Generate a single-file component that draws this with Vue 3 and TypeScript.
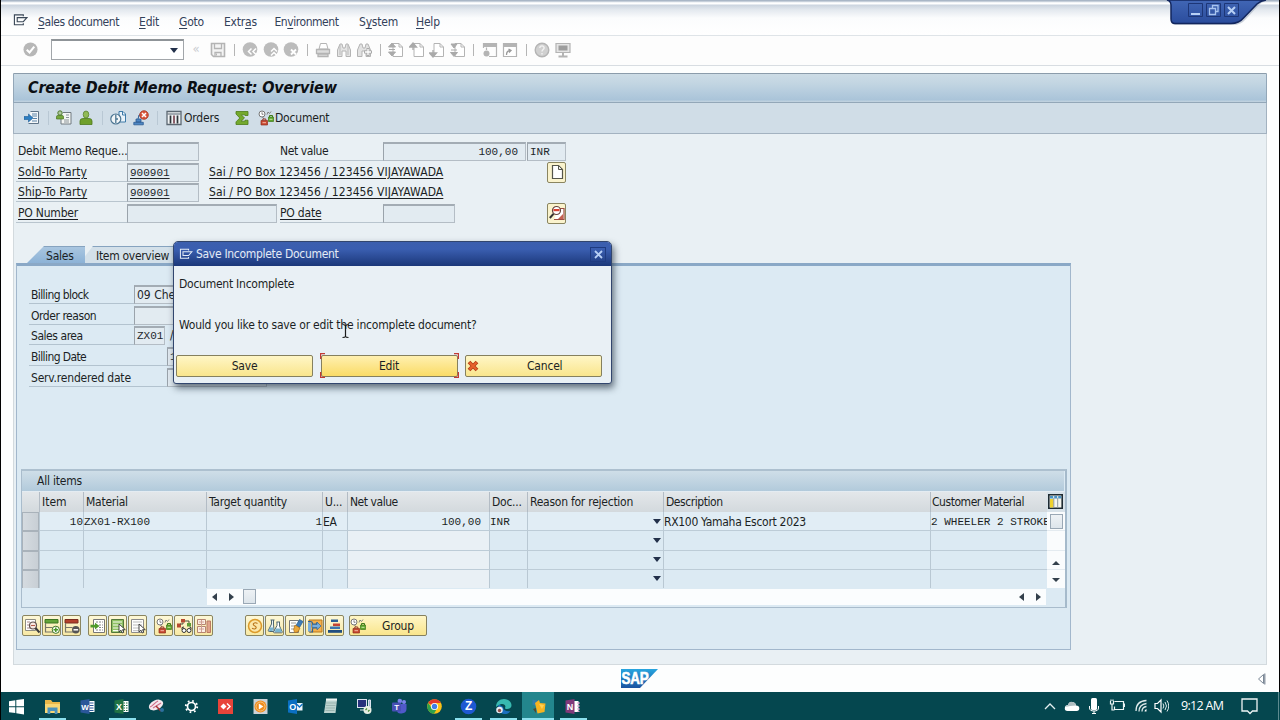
<script setup lang="ts">
const g = '#b4b4b4'
const doc = (stroke: string, x = 5) =>
  `<path d="M${x} 1.5h6l3.500 3.500v9.500h-${9.5}z" fill="#fff" stroke="${stroke}"/><path d="M${x + 6} 1.500v3.500h3.500" fill="none" stroke="${stroke}"/>`
const flow = `<circle cx="4" cy="4" r="3" fill="#fff" stroke="#777"/><path d="M4 2.300v2h1.500M9 4.500l1-2.500 1.500 1.500 1.500-2M4.500 7l1.500 2" fill="none" stroke="#777" stroke-width=".9"/><path d="M3 10.500h6.500v4.500H3z" fill="#c8472e" stroke="#8f3020" stroke-width=".7"/><path d="M4.800 10.500V9h3v1.500" fill="none" stroke="#9a3524"/><path d="M10.500 7h5v4.500h-5z" fill="#5da52a" stroke="#3f7a1a" stroke-width=".7"/><path d="M11.500 7V5.500h3V7" fill="none" stroke="#3f7a1a"/><path d="M4.500 12.700h3.500" stroke="#f2b9a8"/><path d="M11.500 9.300h3" stroke="#c8eaa8"/>`

const icons: Record<string, string> = {
  session: `<path d="M11 3V1.500H1.500v10.500H11v-1.500" fill="none" stroke="currentColor" stroke-width="1.200"/><path d="M4.500 4.500h10.300L11 8.800H4.500z" fill="none" stroke="currentColor" stroke-width="1.200"/>`,
  check: `<circle cx="8" cy="8" r="7.500" fill="#b7b7b7"/><path d="M4 8.200l3 3L12 5" fill="none" stroke="#fff" stroke-width="2.200"/>`,
  save: `<path d="M1.500 1.500h13v13h-11l-2-2z" fill="#f4f4f4" stroke="${g}" stroke-width="1.600"/><path d="M4.500 1.500v5h7v-5M5 14.500v-4h6v4" fill="none" stroke="${g}" stroke-width="1.300"/><path d="M6.500 11.500v2" stroke="${g}"/>`,
  back: `<circle cx="8" cy="7.500" r="7.300" fill="#bcbcbc"/><path d="M9.500 6.500l-3 3 3 3M14 6.500l-3 3 3 3" fill="none" stroke="#fff" stroke-width="1.500"/>`,
  up: `<circle cx="8" cy="7.500" r="7.300" fill="#bcbcbc"/><path d="M8 9.500l3-3 3 3M8 13.500l3-3 3 3" fill="none" stroke="#fff" stroke-width="1.500"/>`,
  stop: `<circle cx="8" cy="7.500" r="7.300" fill="#bcbcbc"/><path d="M8 7.500l5 5M13 7.500l-5 5" stroke="#fff" stroke-width="1.900"/>`,
  print: `<path d="M4 7l1.500-5.500h6L13 7z" fill="#fff" stroke="${g}"/><path d="M1.500 7.500h13v4h-13zM3 12h10v2.500H3z" fill="#ddd" stroke="${g}" stroke-width="1.300"/>`,
  find: `<path d="M1.500 14.500V8L4 2h2l1 4h2l1-4h2l2.500 6v6.500h-4.500V9h-4v5.500z" fill="#e4e4e4" stroke="${g}"/><path d="M4 3v10M12 3v10" stroke="#bbb"/>`,
  findnext: `<path d="M1.500 14.500V8L4 2h2l1 4h2l1-4h2l2.500 6v6.500h-4.500V9h-4v5.500z" fill="#e2e2e2" stroke="${g}"/><path d="M12 6v8M8 10h8" stroke="#aaa" stroke-width="3"/><path d="M12 7v6M9 10h6" stroke="#fff" stroke-width="1.300"/>`,
  first: `${doc(g)}<path d="M4 1l3.500 4h-7zM4 14l3.500-4h-7zM1 7.500h6" fill="#aaa" stroke="#aaa"/>`,
  prev: `${doc(g)}<path d="M4 1l3.500 4h-7zM4 3v5" fill="#aaa" stroke="#aaa" stroke-width="1.300"/>`,
  next: `${doc(g)}<path d="M4 15l3.500-4h-7zM4 12V8" fill="#aaa" stroke="#aaa" stroke-width="1.300"/>`,
  last: `${doc(g)}<path d="M4 6l3-4h-6zM4 14.500l3.500-4h-7zM1 8h6" fill="#aaa" stroke="#aaa"/>`,
  newwin: `<path d="M4.500 8V5.500M1.500 6V1.500h13v13H7" fill="none" stroke="${g}" stroke-width="1.200"/><path d="M1 1h14v4H1z" fill="${g}"/><circle cx="4.500" cy="11.500" r="3" fill="${g}"/>`,
  shortcut: `<path d="M1.500 1.500h13v13h-13z" fill="#fff" stroke="${g}" stroke-width="1.200"/><path d="M1 1h14v4H1z" fill="${g}"/><path d="M4.500 13c0-3 1-4.500 4-4.500M6.500 7l2.500 1.500-2 2" fill="none" stroke="#999" stroke-width="1.300"/>`,
  help: `<circle cx="8" cy="8" r="6.800" fill="#d0d0d0" stroke="${g}" stroke-width="1.400"/><path d="M5.800 6c0-3 4.500-2.600 4.300 0C10 7.500 8 7.600 8 9.500M8 11v1.500" fill="none" stroke="#f2f2f2" stroke-width="1.400"/>`,
  monitor: `<path d="M1 1.500h14v9H1z" fill="#e5e5e5" stroke="${g}" stroke-width="1.200"/><path d="M3.500 3.500h9v5h-9z" fill="#9d9d9d"/><path d="M8 11v3M3.500 14.500h9" stroke="${g}" stroke-width="2"/>`,
  exit: `<path d="M6.500 1.500h8v12h-10" fill="#f5f8fa" stroke="#5f7488"/><path d="M8 4h5M8 6h5M9 8.500h4M8 11h5" stroke="#5b83a7"/><path d="M0 6.500h4.500V4L9 8l-4.500 4V9.500H0z" fill="#2e7fc2" stroke="#1c5d96" stroke-width=".6"/>`,
  partnerdoc: `<path d="M7 2.500h8v11.500H5V9" fill="#f4f6f4" stroke="#707a80"/><path d="M10 5h3M10 7.500h3M8 10h5M8 12h5" stroke="#8a9398"/><circle cx="4" cy="3" r="2.200" fill="#b2c9a0" stroke="#4f7a2d"/><path d="M.5 9V6.500q0-1 1.500-1h4q1.500 0 1.500 1V9z" fill="#76a83c" stroke="#4a7422" stroke-width=".7"/>`,
  person: `<ellipse cx="8" cy="4.500" rx="2.800" ry="3.500" fill="#91ba56" stroke="#5a8430" stroke-width=".8"/><path d="M2 14.500V11q0-2.500 3-2.500h6q3 0 3 2.500v3.500z" fill="#6fa02b" stroke="#4f7a1d" stroke-width=".8"/>`,
  clockdoc: `<path d="M9 1.500h4l2.500 2.500v8H9z" fill="#eaf3fa" stroke="#3e7ba8"/><path d="M12.500 1.500V5h3" fill="none" stroke="#3e7ba8"/><circle cx="5.800" cy="9" r="5" fill="#f1f5f7" stroke="#4b7592" stroke-width="1.200"/><path d="M5.800 4.500V13M5.800 9H8" fill="none" stroke="#4b7592" stroke-width="1.300"/>`,
  stampx: `<path d="M3 9h5v3H3zM.8 12.300h9.500v2.500H.8z" fill="#4e87c4" stroke="#2c5c93" stroke-width=".8"/><path d="M5 9l1-4h3" stroke="#2c5c93" fill="none"/><circle cx="11" cy="5" r="4.300" fill="#d9553c" stroke="#a4331f" stroke-width=".8"/><path d="M9 3l4 4M13 3L9 7" stroke="#fff" stroke-width="1.500"/>`,
  orders: `<path d="M1 1.500h14v13H1z" fill="#f0f3f5" stroke="#5c6872" stroke-width="1.300"/><path d="M1 4h14" stroke="#77828b" stroke-width="1.300"/><path d="M4.500 5.500v8M11.500 5.500v8" stroke="#2d3438" stroke-width="1.700"/><path d="M8 5.500v8" stroke="#7b4652" stroke-width="1.700"/>`,
  sigma: `<path d="M2 1.500h12v4h-3V4.800H7.300L10.500 8l-3.400 3.200H11v-1h3v4.300H2v-2.600L5.800 8 2 4z" fill="#74a92d" stroke="#4d7c17" stroke-width=".8"/>`,
  flow,
  page: `<path d="M3.500 1.500h6l4 4v9h-10z" fill="#fff" stroke="#55554a" stroke-width="1.200"/><path d="M9.500 1.500v4h4z" fill="#eee" stroke="#55554a"/>`,
  headdetail: `<path d="M9.500 3.500h5.500v11H5" fill="#fff" stroke="#9c4c42" stroke-width="1.200"/><path d="M9 14l5-5v5z" fill="#c76052"/><circle cx="7.500" cy="5.500" r="4" fill="#fff" stroke="#66423c" stroke-width="1.200"/><path d="M4.500 4h6v2.200h-6z" fill="#d94030"/><path d="M4.500 8.800L.8 13" stroke="#333" stroke-width="2"/>`,
  detail: `<path d="M1.500 1.500h10v11h-10z" fill="#fff" stroke="#8d8c80"/><path d="M3 4h3M3 7h2M3 10h3" stroke="#a88"/><circle cx="9" cy="7.500" r="3.500" fill="#f7e6df" stroke="#5e514e" stroke-width="1.200"/><path d="M7 7.500h4" stroke="#b65b48"/><path d="M11.500 10l4 4.500" stroke="#3a3a3a" stroke-width="2"/>`,
  rowadd: `<path d="M1 1.500h13v3.500H1z" fill="#63a43a" stroke="#3c7420"/><path d="M1.500 5v9h8M1.500 9.500h7" fill="none" stroke="#77756a" stroke-width="1.200"/><circle cx="11.800" cy="11.800" r="3.600" fill="#fff" stroke="#3c7420"/><path d="M11.800 9.500v4.600M9.500 11.800h4.600" stroke="#4a9628" stroke-width="1.500"/>`,
  rowdel: `<path d="M1 1.500h13v3.500H1z" fill="#b3402c" stroke="#7a2c1e"/><path d="M1.500 5v9h8M1.500 9.500h7" fill="none" stroke="#77756a" stroke-width="1.200"/><circle cx="11.800" cy="11.800" r="3.800" fill="#555"/><path d="M9.500 11.800h4.600" stroke="#fff" stroke-width="1.500"/>`,
  insert: `<path d="M3.500 1.500h11v13h-11z" fill="#fff" stroke="#777"/><path d="M6 4h7M9 7h4M9 9.500h4M6 12h7" stroke="#888" stroke-dasharray="2 1"/><path d="M9.500 8L5 4.800v2H.5v2.600H5v2z" fill="#4e9a2a"/>`,
  selall: `<path d="M1.500 1.500h12v13h-12z" fill="#8ec063" stroke="#52773a"/><path d="M3 4h9M3 7h9M3 10h9M3 12.700h9" stroke="#f7fbf0" stroke-width="1.200"/><path d="M9 6v8l2-1.800 1.300 2.800 1.500-.8-1.300-2.500h2.800z" fill="#fff" stroke="#333" stroke-width=".9"/>`,
  desel: `<path d="M1.500 1.500h12v13h-12z" fill="#fff" stroke="#8b8b8b"/><path d="M3 4h9M3 7h9M3 10h9M3 12.700h9" stroke="#bbb"/><path d="M9 6v8l2-1.800 1.300 2.800 1.500-.8-1.300-2.500h2.800z" fill="#fff" stroke="#333" stroke-width=".9"/>`,
  tree: `<path d="M5 1h4v3.500H5zM1 5.500h4v4H1z" fill="#b64a31"/><path d="M11 5h4v3.500h-4z" fill="#5b9b36"/><path d="M7 4.500v1.500H4M9 3h4v2" fill="none" stroke="#4b4b36"/><circle cx="8" cy="12.500" r="2" fill="#fff" stroke="#333"/><circle cx="13" cy="12.500" r="2" fill="#fff" stroke="#333"/><path d="M6 11.500V9.500l2-.5M15 11.500V9.500L13.500 9" fill="none" stroke="#333"/>`,
  grid: `<path d="M1.500 1.500h8v5h-8zM1.500 8.500h8v6h-8z" fill="#fbeee4" stroke="#b68470"/><path d="M3 4h5M3 11h5M5.500 2v12" stroke="#cf9f92"/><path d="M11 3h3.500v11.500H11z" fill="#e0a48c" stroke="#bb7a62"/>`,
  coin: `<circle cx="8" cy="8" r="6.500" fill="#fbe6a8" stroke="#dc9a2a" stroke-width="1.500"/><path d="M10.500 5.500c-3-2-6 .8-3 2.200 3.200 1.400 1.500 4.400-2.500 2.600" fill="none" stroke="#b9741a" stroke-width="1.100"/>`,
  flask: `<path d="M3.500 2h4M4.500 2v4l-3.200 6.500q0 1 1 1h5l-.5-3L6.500 6V2" fill="#eaf3f4" stroke="#4d6670"/><path d="M9.500 4h3.500M10 4v3.500L6.500 14q0 .8 1 .8h7q1 0 .7-1L12.500 8V4" fill="#fff" stroke="#4d6670"/><path d="M9 10.500h4.800l1 3.500H7.500z" fill="#79b3ce"/><path d="M3 9.500h3.500l-1 3.500H2z" fill="#79b3ce"/>`,
  notepen: `<path d="M2.500 2.500h9v12h-9z" fill="#fff" stroke="#777"/><path d="M4 5h5M4 8h4M4 11h3" stroke="#999"/><path d="M9 7.500L12.500 1.500 16 3.500 12.500 9.500z" fill="#3d7bb8" stroke="#285a8c" stroke-width=".7"/><path d="M8 7l5 3-2 4-3.500.5-.8-3z" fill="#eba83c" stroke="#a86b13" stroke-width=".7"/>`,
  route: `<path d="M2 2h13v12H2z" fill="#f3b04e" stroke="#b7781f"/><path d="M1 3.500h2.500q2 0 2 2.500h4V4.500M10 10H6.500q-1 0-1 1.500V14H2.500" fill="none" stroke="#2f6496" stroke-width="1.200"/><path d="M1 4.500h3v9H1z" fill="#78aede"/><path d="M5 6.500h5V4l4 4-4 3.800V9.500H5z" fill="#78aede" stroke="#2f6496" stroke-width=".7"/>`,
  levels: `<path d="M4 1.500h7v2.500H4z" fill="#2c5f95"/><path d="M6 5.500h7V8H6z" fill="#c34434"/><path d="M3 8.500h10V11H3z" fill="#3c76b0"/><path d="M1 12h14v2.800H1z" fill="#214e80"/>`,
}

const disabled = ['back', 'up', 'stop', '', 'print', 'find', 'findnext', '', 'first', 'prev', 'next', 'last', '', 'newwin', 'shortcut', '', 'help', 'monitor']

const menus = [
  ['', 'S', 'ales document', 'm1'],
  ['', 'E', 'dit', 'm2'],
  ['', 'G', 'oto', 'm3'],
  ['Extr', 'a', 's', 'm4'],
  ['En', 'v', 'ironment', 'm5'],
  ['S', 'y', 'stem', 'm6'],
  ['', 'H', 'elp', 'm7'],
]

const columns = ['', 'Item', 'Material', 'Target quantity', 'U...', 'Net value', 'Doc...', 'Reason for rejection', 'Description', 'Customer Material']
const rows = [1, 2, 3, 4]
const itemTools = [
  ['detail', 'rowadd', 'rowdel'],
  ['insert', 'selall', 'desel'],
  ['flow', 'tree', 'grid'],
  ['coin', 'flask', 'notepen', 'route', 'levels'],
]

const letter = (t: string, x: number, s = 9, c = '#fff') =>
  `<text x="${x}" y="12.300" font-size="${s}" font-weight="700" font-family="Liberation Sans" text-anchor="middle" fill="${c}">${t}</text>`
const apps = [
  { n: 'start', on: false, act: false, s: `<path d="M1 3.200l6.300-.9v5.900H1zM8.300 2.100L16 1v7.200H8.300zM1 9.200h6.300v5.900L1 14.200zM8.300 9.200H16v7.200l-7.700-1.100z" fill="#fff"/>` },
  { n: 'files', on: true, act: false, s: `<path d="M1 2h6l1.500 2H16v11H1z" fill="#e9b84a"/><path d="M1 6h15v9H1z" fill="#f8d775"/><path d="M3.500 9.500h10V16h-2.800v-3H6.300v3H3.500z" fill="#4b93bd"/>` },
  { n: 'word', on: false, act: false, s: `<path d="M9 3h6.500v11H9z" fill="#fff"/><path d="M10.500 5h4M10.500 7.500h4M10.500 10h4M10.500 12.500h4" stroke="#2b579a"/><path d="M1.500 2.500L10.500 1v15l-9-1.500z" fill="#2b579a"/>${letter('W', 6, 8)}` },
  { n: 'excel', on: true, act: false, s: `<path d="M9 3h6.500v11H9z" fill="#fff"/><path d="M10.500 5h4M10.500 7.500h4M10.500 10h4M10.500 12.500h4" stroke="#207245" stroke-dasharray="1.500 1"/><path d="M1.500 2.500L10.500 1v15l-9-1.500z" fill="#207245"/>${letter('X', 6, 9)}` },
  { n: 'snip', on: false, act: false, s: `<ellipse cx="8" cy="7" rx="7.500" ry="4.800" transform="rotate(-25 8 7)" fill="#f5e9ee"/><path d="M2 9c3-1 4-4 8-6M5 10l8-5" stroke="#d0708a" stroke-width="1.300" fill="none"/><path d="M8 8l5 5" stroke="#a33" stroke-width="1.500"/><circle cx="14" cy="12" r="2" fill="#2b6f9e"/>` },
  { n: 'settings', on: false, act: false, s: `<circle cx="8.500" cy="8.500" r="4" fill="none" stroke="#fff" stroke-width="1.700"/><circle cx="8.500" cy="8.500" r="5.700" fill="none" stroke="#fff" stroke-width="1.900" stroke-dasharray="1.700 2.777"/>` },
  { n: 'anydesk', on: false, act: false, s: `<rect x="1" y="1" width="15" height="15" fill="#e8443a"/><path d="M6.500 5.500l3 3-3 3-3-3z" fill="#fff"/><path d="M10 5.500l3 3-3 3" fill="none" stroke="#fff" stroke-width="1.400"/>` },
  { n: 'media', on: false, act: false, s: `<rect x="1.500" y="1" width="14" height="15" fill="#cbd3d8"/><circle cx="8.500" cy="8.500" r="6" fill="#ef8d1d"/><circle cx="8.500" cy="8.500" r="4.500" fill="none" stroke="#f8c37e"/><path d="M6.800 5.500l4.500 3-4.500 3z" fill="#fff"/>` },
  { n: 'outlook', on: false, act: false, s: `<path d="M9 5h6.500v7.500H9z" fill="#eaf4fb"/><path d="M9.500 6l3 3 3-3" fill="none" stroke="#0b6fc2" stroke-width="1.300"/><path d="M1 2.500L10 1v15l-9-1.500z" fill="#0b6fc2"/>${letter('O', 5.6, 9)}` },
  { n: 'notes', on: false, act: false, s: `<path d="M4 2h11l-1.500 13H2z" fill="#bcd3cf"/><path d="M4 5h10M4 7.500h9.500M3.500 10h9.500M3.500 12.500h9" stroke="#9bb5b1"/><path d="M4 1.500h11" stroke="#eef5f3" stroke-width="2"/>` },
  { n: 'remote', on: false, act: false, s: `<rect x="1.500" y="1.500" width="9" height="8" fill="#27317d" stroke="#dbe3ef"/><path d="M4 12h6M12.500 2h2v7h-2z" stroke="#dbe3ef" fill="#9fb0d0"/><circle cx="11.500" cy="12" r="4" fill="#e8efe4"/><path d="M9.500 12l1.500-1.500M12 13.500l1.500-1.500" stroke="#4e8f3a" stroke-width="1.300"/>` },
  { n: 'teams', on: false, act: false, s: `<circle cx="13" cy="4" r="2" fill="#7b83eb"/><circle cx="8.800" cy="3" r="2.300" fill="#7b83eb"/><path d="M6 6h9.500v5q0 4-5 4.500T6 11z" fill="#5059c9"/><rect x="1" y="4.500" width="9" height="9" rx="1" fill="#4750b5"/>${letter('T', 5.5, 8)}` },
  { n: 'chrome', on: false, act: false, s: `<circle cx="8.500" cy="8.500" r="7.300" fill="#fbc116"/><path d="M8.500 8.500L2.200 4.900A7.300 7.300 0 0 1 14.900 5H8.500z" fill="#e33b2e"/><path d="M2.200 4.900A7.300 7.300 0 0 0 8 15.800l3.200-5.500L8.500 8.500 5.700 10z" fill="#2fa24c"/><circle cx="8.500" cy="8.500" r="3.600" fill="#fff"/><circle cx="8.500" cy="8.500" r="2.700" fill="#3f7ee8"/>` },
  { n: 'zoom', on: true, act: false, s: `<circle cx="8.500" cy="8.500" r="7.800" fill="#1e58d2"/>${letter('Z', 8.5, 12)}` },
  { n: 'edge', on: true, act: false, s: `<path d="M1 9C1 4 4.500 1 9 1s7.500 3 7.500 6.200c0 2.600-2 3.800-4.500 3.800-1.500 0-2.500-.6-1.800-1.600C11 7.500 9 5.500 6.500 6S1 9 1 9z" fill="#37b9b0"/><path d="M4 6.500C2 9 3 15 9.500 16c3 0 5-1.500 6-3-3 1-7 0-7.500-4z" fill="#1b6fc0"/><circle cx="4.500" cy="12" r="3.300" fill="#e8edf2"/><circle cx="4.500" cy="12.500" r="1.700" fill="#934f4a"/>` },
  { n: 'sap', on: true, act: true, s: `<path d="M2.500 1.500l5 1v6l-5-2z" fill="#2f7fae"/><path d="M5 5l4-3 1 3 5.500.5L14.500 14l-7 1.500z" fill="#f6b421"/><path d="M3 11l3-1v5z" fill="#4e4a35"/><path d="M9 6l5 1-2 4" fill="#ffd152"/>` },
  { n: 'onenote', on: true, act: false, s: `<path d="M9 3h5.500v11H9z" fill="#fff"/><path d="M14.500 4v10" stroke="#d5a4cd" stroke-width="2" stroke-dasharray="2 1"/><path d="M1.500 2.500L10.500 1v15l-9-1.500z" fill="#80397b"/>${letter('N', 6, 9)}` },
]
</script>

<template>
  <div class="screen">
    <header class="menubar">
      <svg class="sess" viewBox="0 0 16 14" v-html="icons.session" />
      <span v-for="m in menus" :key="m[3]" class="menu" :class="m[3]">{{ m[0] }}<u>{{ m[1] }}</u>{{ m[2] }}</span>
      <div class="winctl">
        <svg width="104" height="28" viewBox="0 0 104 28">
          <defs>
            <linearGradient id="wc" x1="0" y1="0" x2="0" y2="1"><stop offset="0" stop-color="#4166b5" /><stop offset="1" stop-color="#2a4c9c" /></linearGradient>
          </defs>
          <path d="M3 1q3 2 3 6v14q0 4 4 4h57q8 0 13-6l13-14q4-4 8-4z" fill="#9aa5b5" opacity=".5" />
          <path d="M1 0q4 1 4 5v14q0 4.500 4 4.500h56q8 0 13-6L91 4q4-3.500 9-4z" fill="url(#wc)" stroke="#12265e" stroke-width="1.500" />
          <g fill="none" stroke="#1d3677"><path d="M22.500 3.500h14v13h-14zM40.500 3.500h14v13h-14zM58.500 3.500h14v13h-14z" /></g>
          <path d="M25 14h9" stroke="#b8d0f5" stroke-width="2" />
          <path d="M43.500 8.500h6v6h-6zM46.500 8V5.500h5.500v6H50" fill="none" stroke="#a9c4ef" stroke-width="1.300" />
          <path d="M62 7l7 7M69 7l-7 7" stroke="#b8d0f5" stroke-width="2" />
        </svg>
      </div>
    </header>

    <div class="toolbar">
      <svg class="ic chk" viewBox="0 0 16 16" v-html="icons.check" />
      <div class="combo"><i class="tri" /></div>
      <span class="guil">«</span>
      <span class="slot"><svg class="ic" viewBox="0 0 16 16" v-html="icons.save" /></span>
      <span class="sepslot"><i /></span>
      <template v-for="(n, i) in disabled" :key="i">
        <span v-if="n" class="slot"><svg class="ic" viewBox="0 0 16 16" v-html="icons[n]" /></span>
        <span v-else class="sepslot"><i /></span>
      </template>
    </div>

    <main class="panel">
      <h1 class="title"><span>Create Debit Memo Request: Overview</span></h1>
      <div class="appbar">
        <span class="a1"><svg class="ic" viewBox="0 0 16 16" v-html="icons.exit" /></span><i class="vs" />
        <span class="a2"><svg class="ic" viewBox="0 0 16 16" v-html="icons.partnerdoc" /></span>
        <span class="a3"><svg class="ic" viewBox="0 0 16 16" v-html="icons.person" /></span><i class="vs" />
        <span class="a2"><svg class="ic" viewBox="0 0 16 16" v-html="icons.clockdoc" /></span>
        <span class="a2"><svg class="ic" viewBox="0 0 16 16" v-html="icons.stampx" /></span><i class="vs" />
        <svg class="ic o1" viewBox="0 0 16 16" v-html="icons.orders" /><span class="ordtxt">Orders</span>
        <svg class="ic" viewBox="0 0 16 16" v-html="icons.sigma" />
        <svg class="ic o3" viewBox="0 0 16 16" v-html="icons.flow" /><span class="doctxt">Document</span>
      </div>

      <section class="head">
        <div class="hrow">
          <label class="lb">Debit Memo Reque...</label><b class="fld w72" />
          <label class="lb2 ml80 nv">Net value</label><b class="fld w143 num">100,00</b><b class="fld w39 cur">INR</b>
        </div>
        <div class="hrow">
          <label class="lb so"><u>Sold-To Party</u></label><b class="fld w72"><u>900901</u></b><u class="addr">Sai / PO Box 123456 / 123456 VIJAYAWADA</u>
          <span class="hb"><svg class="ic" viewBox="0 0 16 16" v-html="icons.page" /></span>
        </div>
        <div class="hrow">
          <label class="lb so"><u>Ship-To Party</u></label><b class="fld w72"><u>900901</u></b><u class="addr">Sai / PO Box 123456 / 123456 VIJAYAWADA</u>
        </div>
        <div class="hrow">
          <label class="lb po"><u>PO Number</u></label><b class="fld w150" />
          <label class="lb2 pd"><u>PO date</u></label><b class="fld w72" />
          <span class="hb hb2"><svg class="ic" viewBox="0 0 16 16" v-html="icons.headdetail" /></span>
        </div>
      </section>

      <nav class="tabs">
        <div class="tab on"><span>Sales</span></div>
        <div class="tab"><span>Item overview</span></div>
      </nav>

      <section class="sheet">
        <div class="sales">
          <div class="srow"><label class="bb">Billing block</label><b class="fld wide tx">09 Check</b></div>
          <div class="srow"><label class="or">Order reason</label><b class="fld wide" /></div>
          <div class="srow"><label class="or">Sales area</label><b class="fld w31">ZX01</b><span class="slash">/</span></div>
          <div class="srow"><label class="long bb">Billing Date</label><b class="fld w100">12.05.2023</b></div>
          <div class="srow"><label class="long">Serv.rendered date</label><b class="fld w100" /></div>
        </div>

        <div class="items">
          <div class="ititle">All items</div>
          <div class="grid">
            <div class="gr gh">
              <span v-for="(c, i) in columns" :key="i" :class="'h' + i">{{ c }}</span>
              <span class="cfg"><svg width="15" height="15" viewBox="0 0 15 15"><path d="M.8.800h13.400v13.400H.800z" fill="#f5f5ee" stroke="#1e2b33" stroke-width="1.600" /><path d="M2 2h3.200v2.500H2zM6.200 2h3v2.500h-3zM10.200 2h3v2.500h-3z" fill="#4a93c4" /><path d="M2 5h3.500v8.500H2z" fill="#f0d22c" /><path d="M5.800 4v10M9.700 4v10" stroke="#8d989f" /></svg></span>
            </div>
            <div v-for="r in rows" :key="r" class="gr gb" :class="'r' + r">
              <span class="sel" />
              <span class="mono rt">{{ r === 1 ? '10' : '' }}</span>
              <span class="mono">{{ r === 1 ? 'ZX01-RX100' : '' }}</span>
              <span class="mono rt">{{ r === 1 ? '1' : '' }}</span>
              <span>{{ r === 1 ? 'EA' : '' }}</span>
              <span class="mono rt net">{{ r === 1 ? '100,00' : '' }}</span>
              <span class="mono">{{ r === 1 ? 'INR' : '' }}</span>
              <span class="dd"><i class="tri" /></span>
              <span class="desc">{{ r === 1 ? 'RX100 Yamaha Escort 2023' : '' }}</span>
              <span class="mono">{{ r === 1 ? '2 WHEELER 2 STROKE' : '' }}</span>
              <span class="vs-cell"><i v-if="r === 1" class="thumb" /><i v-if="r === 3" class="ar up" /><i v-if="r === 4" class="ar dn" /></span>
            </div>
          </div>
          <div class="hscroll">
            <i class="ar lf" /><i class="ar rg" /><i class="thumb" /><i class="track" /><i class="ar lf" /><i class="ar rg" />
          </div>
        </div>

        <div class="itools">
          <div v-for="(grp, gi) in itemTools" :key="gi" class="grp" :class="'g' + gi">
            <span v-for="n in grp" :key="n" class="yb"><svg class="ic" viewBox="0 0 16 16" v-html="icons[n]" /></span>
          </div>
          <button class="group"><svg class="ic" viewBox="0 0 16 16" v-html="icons.flow" /><span>Group</span></button>
        </div>
      </section>
    </main>

    <footer class="status">
      <svg class="sap" width="37" height="19" viewBox="0 0 37 19">
        <defs><linearGradient id="sg" x1="0" y1="0" x2="0" y2="1"><stop offset="0" stop-color="#27a5df" /><stop offset="1" stop-color="#1a52a0" /></linearGradient></defs>
        <path d="M0 0h37L19 19H0z" fill="url(#sg)" />
        <text x="0.500" y="15" font-family="Liberation Sans" font-size="16" font-weight="700" fill="#fff" stroke="#fff" stroke-width=".6" textLength="27" lengthAdjust="spacingAndGlyphs">SAP</text>
      </svg>
      <svg class="coll" width="9" height="14" viewBox="0 0 9 14"><path d="M6.500 2.500v9L1.500 7z" fill="#fff" stroke="#7b8896" /><path d="M7.800 1.500v11" stroke="#7b8896" stroke-width="1.200" /></svg>
    </footer>

    <div class="taskbar">
      <div v-for="a in apps" :key="a.n" class="app" :class="{ run: a.on, act: a.act, start: a.n === 'start' }">
        <svg width="17" height="17" viewBox="0 0 17 17" v-html="a.s" />
      </div>
      <div class="tray">
        <svg class="chev" width="14" height="18" viewBox="0 0 14 18"><path d="M2 12l5-5 5 5" fill="none" stroke="#e4eff0" stroke-width="1.300" /></svg>
        <svg class="t2" width="16" height="18" viewBox="0 0 16 18"><path d="M3.500 14Q.500 14 .800 11T4 8q1-3.500 4.500-3T12 8.500q3.300 0 3.300 2.800T12.500 14z" fill="#fff" /><path d="M1 10l3-2q1-4 4.500-3T12 8.500L6 9z" fill="#aebdc0" /></svg>
        <svg class="t3" width="12" height="18" viewBox="0 0 12 18"><rect x="3" y="1" width="6" height="12" rx="1.500" fill="#fff" /><path d="M1.500 9v2q0 3 4.500 3t4.500-3V9M6 14v2.500M4 16.500h4" fill="none" stroke="#fff" /></svg>
        <svg class="t4" width="16" height="18" viewBox="0 0 16 18"><path d="M5.500 4.500h9v8h-9v-3M14.500 7h1v3M1.500 4v3h3V4M3 7v6h2.500M2 2.500V4M4 2.500V4" fill="none" stroke="#eef5f5" stroke-width="1.200" /></svg>
        <svg class="t5" width="14" height="18" viewBox="0 0 14 18"><path d="M2 14Q2 4 12.500 3.500M5 14.500Q5 7.500 12.500 6.500M8 14.500q0-4.500 4.500-5" fill="none" stroke="#dce9ea" stroke-width="1.300" /><path d="M10.500 14.500q0-2 2-2.500v2.500z" fill="#fff" /></svg>
        <svg class="t6" width="15" height="18" viewBox="0 0 15 18"><path d="M1 6.500h2.500L7 3v12L3.500 11.500H1z" fill="none" stroke="#fff" stroke-width="1.200" /><path d="M9 6.500q1.700 2.500 0 5M11 5q3 4 0 8M13 3.500q3.500 5.500 0 11" fill="none" stroke="#dce9ea" /></svg>
        <span class="time">9:12 AM</span>
        <svg class="t7" width="17" height="18" viewBox="0 0 17 18"><path d="M1 2h15v12h-4.500L9 16.500 6.500 14H1z" fill="none" stroke="#f0f6f6" stroke-width="1.300" /></svg>
        <i class="desk" />
      </div>
    </div>

    <div class="dialog">
      <div class="dtitle">
        <svg class="ds" viewBox="0 0 16 14" v-html="icons.session" /><span>Save Incomplete Document</span>
        <i class="dx"><svg width="9" height="9" viewBox="0 0 9 9"><path d="M1 1l7 7M8 1L1 8" stroke="#b8d0f5" stroke-width="1.800" /></svg></i>
      </div>
      <p class="p1">Document Incomplete</p>
      <p class="p2">Would you like to save or edit the incomplete document?</p>
      <div class="dbtns">
        <button>Save</button>
        <button class="def"><svg class="corners" width="139" height="25" viewBox="0 0 139 25"><path d="M.5 6V.5H5M134 .5h4.500V6M138.500 19v5.500H134M5 24.500H.5V19" fill="none" stroke="#c23a35" stroke-width="1.400" /></svg>Edit</button>
        <button class="cancel"><svg width="12" height="12" viewBox="0 0 12 12"><path d="M2 2l8 8M10 2l-8 8" stroke="#b43c16" stroke-width="3.800" /><path d="M2.500 2.500l7 7M9.500 2.500l-7 7" stroke="#e8622c" stroke-width="2" /></svg><span>Cancel</span></button>
      </div>
    </div>
    <svg class="caret" width="9" height="16" viewBox="0 0 9 16"><path d="M1.500 1.500q2.500 0 3 1.500.5-1.500 3-1.500M4.500 3v11M1.500 14.500q2.500 0 3-1 .5 1 3 1" fill="none" stroke="#1a1a1a" stroke-width="1.200" /></svg>
  </div>
</template>

<style>
html, body { margin: 0; overflow: hidden; }
</style>

<style scoped>
.screen { position: relative; width: 1280px; height: 720px; box-sizing: border-box; display: flex; flex-direction: column; background: #fdfefe; border-left: 1px solid #000; overflow: hidden; font-family: "DejaVu Sans Condensed", "DejaVu Sans", sans-serif; font-stretch: condensed; font-size: 12px; letter-spacing: -.2px; color: #1b1f24; }
.screen::after { content: ""; position: absolute; right: 0; top: 0; width: 1px; height: 692px; background: #000; }
.ic { width: 16px; height: 16px; display: block; flex: none; }
u { text-decoration: underline; text-underline-offset: 2px; }
i { display: block; flex: none; }
.menubar { height: 36px; flex: none; box-sizing: border-box; display: flex; align-items: center; padding: 9px 0 0 12px; border-bottom: 1px solid #dfe4e8; background: linear-gradient(#a9b6c6 0 1px, #e5eaf0 2px, #fff 3px, #fff 4px, #cbd4df 5px, #e4e9ef 10px, #fbfcfd 18px, #fff); color: #33415a; white-space: nowrap; }
.sess { width: 15px; height: 14px; margin-top: -5px; color: #3b4858; }
.menu { height: 16px; line-height: 16px; }
.m1 { margin-left: 10px; width: 101px; letter-spacing: -.4px; } .m2 { width: 40px; } .m3 { width: 45px; } .m4 { width: 50.500px; } .m5 { width: 84.500px; letter-spacing: -.45px; } .m6 { width: 57px; }
.winctl { position: absolute; right: 10px; top: 0; height: 28px; }
.toolbar { height: 30px; flex: none; box-sizing: border-box; display: flex; align-items: center; padding: 0 0 2px 22px; border-bottom: 1px solid #d8dde2; background: #fdfdfd; }
.chk { width: 15px; height: 15px; }
.combo { width: 133px; height: 21px; box-sizing: border-box; margin-left: 13px; border: 1px solid #a2a6aa; border-top: 2px solid #8f9498; background: #fff; display: flex; align-items: center; justify-content: flex-end; padding-right: 5px; }
.tri { width: 0; height: 0; border: 4.500px solid transparent; border-top: 5px solid #22304a; border-bottom: 0; }
.guil { width: 24px; text-align: center; color: #c9ccd0; font-size: 13px; margin-top: -3px; }
.slot { width: 20.800px; display: flex; justify-content: center; }
.sepslot { width: 10.600px; display: flex; justify-content: center; }
.sepslot i { width: 1px; height: 12px; background: #b5b5b5; }

.panel { margin: 7px 0 0 12px; width: 1254px; height: 592px; flex: none; box-sizing: border-box; border: 1px solid #d3dade; border-top-color: #8b9cab; background: #e9f0f4; display: flex; flex-direction: column; }
.title { margin: 0 -1px; height: 29px; box-sizing: border-box; border: 1px solid #93a7b8; border-top: 0; background: linear-gradient(#cddce6, #c2d5e2 35%, #aac4d9 92%, #c5d5e1); font-size: 16px; letter-spacing: -.15px; font-style: italic; font-weight: 700; color: #0b0f14; line-height: 27px; padding-left: 14px; white-space: nowrap; }
.appbar { margin: 0 -1px; height: 31px; box-sizing: border-box; border: 1px solid #a3b2c0; border-top: 0; background: #d0dde7; display: flex; align-items: center; }
.a1 { margin-left: 10px; } .a2 { margin-left: 7px; } .a3 { margin-left: 6px; }
.vs { width: 1px; height: 14px; background: #b9c8d4; margin: 0 0 0 8px; }
.o1 { margin-left: 8px; } .ordtxt { margin-left: 2px; width: 50px; } .o3 { margin-left: 8px; } .doctxt { margin-left: 1px; }
.head { height: 83px; padding: 8px 0 0 2px; flex: none; }
.hrow { display: flex; height: 20.600px; align-items: stretch; white-space: nowrap; }
.lb { width: 111px; box-sizing: border-box; padding-left: 2px; height: 19px; line-height: 19px; border-bottom: 1px solid #b9c5ce; }
.so { letter-spacing: .05px; }
.lb2 { width: 103px; margin-left: 3px; box-sizing: border-box; height: 19px; line-height: 19px; border-bottom: 1px solid #b9c5ce; }
.nv { letter-spacing: -.4px; }
.ml80 { margin-left: 81px; }
.fld { height: 19px; box-sizing: border-box; border: 1px solid #b4bdc5; border-top: 2px solid #a3acb4; border-left: 1px solid #9aa3ab; background: #e2ebf1; font: 400 11px/16px "Liberation Mono", monospace; letter-spacing: 0; padding: 0 0 0 2px; white-space: pre; color: #22272c; }
.w72 { width: 72px; } .w143 { width: 143px; } .w39 { width: 39px; margin-left: 1px; } .w150 { width: 150px; }
.num { text-align: right; padding-right: 7px; }
.addr { margin-left: 10px; height: 19px; line-height: 19px; width: 338px; letter-spacing: .1px; }
.hb, .yb { box-sizing: border-box; width: 19px; height: 21px; border: 1px solid #8a8560; border-radius: 2px; background: linear-gradient(#fdf8d8, #f8e9a4); display: flex; align-items: center; justify-content: center; }
.hb { margin-top: -1px; background: #faf3cd; }
.hb2 { margin-left: 92px; }
.tabs { height: 17px; margin-top: auto; padding-left: 13px; display: flex; flex: none; white-space: nowrap; }
.tab { height: 17px; width: 58px; clip-path: polygon(0 100%, 17px 0, 100% 0, 100% 100%); background: linear-gradient(#a9c6e0, #8cb2d6); line-height: 18px; border-top: 1px solid #86a3bf; box-sizing: border-box; }
.tab span { margin-left: 19px; }
.tab + .tab { width: 100px; clip-path: polygon(0 60%, 8px 0, 100% 0, 100% 100%, 0 100%); background: #d3e0e9; letter-spacing: -.3px; }
.tab + .tab span { margin-left: 11px; }
.sheet { margin: 0 0 14px 2px; width: 1055px; height: 387px; flex: none; box-sizing: border-box; border: 1px solid #a2b7cc; border-top: 3px solid #8aa8c6; background: #dceaf3; }
.sales { padding: 19px 0 0 12px; height: 184px; box-sizing: border-box; }
.srow { height: 20.700px; display: flex; white-space: nowrap; }
.srow label { width: 105px; box-sizing: border-box; padding-left: 2px; height: 19px; line-height: 21px; border-bottom: 1px solid #b3c3cf; }
.srow label.long { width: 138px; }
.srow .bb { letter-spacing: -.6px; } .srow .or { letter-spacing: -.45px; }
.wide { width: 200px; } .w31 { width: 31px; } .w100 { width: 100px; }
.tx { font-family: "DejaVu Sans Condensed", sans-serif; font-size: 12px; }
.slash { padding-left: 5px; line-height: 19px; }
.items { margin-left: 4px; width: 1046px; height: 139px; box-sizing: border-box; border: 1px solid #a9bccc; border-top: 2px solid #adc0cf; border-right: 2px solid #a5bacb; margin-top: 19px; }
.ititle { height: 21px; line-height: 20px; padding-left: 15px; background: linear-gradient(#cfdee8, #b2cadb); border-bottom: 1px solid #e4ecf2; box-sizing: border-box; margin-right: 1px; }
.gr { display: grid; grid-template-columns: 17px 44px 123px 116px 25px 142px 38px 136px 267px 117px 18px; white-space: nowrap; }
.gh { height: 20px; }
.gh span { background: linear-gradient(#e3e7ea, #d3d9dd); border-left: 1px solid #b3bcc5; padding-left: 2px; line-height: 21px; overflow: hidden; letter-spacing: -.25px; }
.gh .h0 { border-left: 0; }
.gh .h1 { letter-spacing: 0; }
.gh .h5, .gh .h8, .gh .h9 { letter-spacing: -.45px; }
.gh .h9 { padding-left: 1px; }
.gh .cfg { padding: 2px 0 0 1px; border-left: 0; background: #d8e2e9; }
.gb { height: 19.300px; line-height: 20px; }
.gb span { border-left: 1px solid #b9c8d3; border-bottom: 1px solid #bdccd7; overflow: hidden; box-sizing: border-box; }
.gb.r4 { height: 18px; } .gb.r4 span { border-bottom: 0; }
.r1 span { background: #e1edf5; }
.gb .sel { border: 1px solid #a9b2ba; background: linear-gradient(90deg, #d5dbe0, #c8cfd5); }
.mono { font: 11px/20px "Liberation Mono", monospace; letter-spacing: 0; }
.desc { letter-spacing: -.3px; }
.rt { text-align: right; }
.gb .net { padding-right: 8px; }
.r2 .net, .r3 .net, .r4 .net { background: #e9f0f5; }
.dd { display: flex; justify-content: flex-end; align-items: center; padding-right: 2px; }
.gb .vs-cell { background: #fafcfd; border: 0; border-bottom: 1px solid #e4ebf0; display: flex; align-items: center; justify-content: center; }
.r3 .up { margin-top: 6px; } .r4 .dn { margin-top: 2px; }
.thumb { width: 13px; height: 15px; box-sizing: border-box; border: 1px solid #9aa8b5; background: linear-gradient(#eef2f5, #dde5eb); }
.ar { width: 0; height: 0; border: 4px solid transparent; }
.up { border-bottom-color: #33404c; border-top: 0; } .dn { border-top-color: #33404c; border-bottom: 0; }
.lf { border-right: 5px solid #33404c; border-left: 0; } .rg { border-left: 5px solid #33404c; border-right: 0; }
.hscroll { display: flex; align-items: center; height: 16px; margin: 1px 0 0 185px; width: 839px; background: #fbfdfe; padding-left: 5px; box-sizing: border-box; gap: 12px; }
.hscroll .thumb { margin-left: -3px; }
.track { width: 739px; height: 10px; }
.itools { display: flex; margin: 7px 0 0 5px; height: 21px; }
.grp { display: flex; gap: 1px; margin-right: 7px; }
.g2 { margin-right: 32px; }
.g3 { margin-right: 5px; }
.group, .dbtns button { box-sizing: border-box; border: 1px solid #85805e; border-radius: 2px; background: linear-gradient(#fff6c6, #f9e58c); font-family: inherit; font-size: 12px; letter-spacing: -.2px; color: #1b1f24; padding: 0; }
.group { width: 78px; height: 21px; display: flex; align-items: center; }
.group span { margin-left: 16px; }
.status { height: 27px; flex: none; display: flex; align-items: center; background: #fdfefe; }
.sap { margin-left: 620px; } .coll { margin-left: 599px; }
.taskbar { height: 28px; flex: none; display: flex; background: #05474f; }
.app { width: 34.700px; height: 28px; box-sizing: border-box; display: flex; align-items: center; justify-content: center; border-bottom: 2px solid transparent; padding-top: 2px; position: relative; flex: none; }
.start { margin: 0 1.500px 0 -2px; }
.run::after { content: ""; position: absolute; left: 4px; bottom: -2px; width: 27px; height: 2px; background: #8be0ee; }
.act { background: linear-gradient(90deg, transparent 1px, #23868d 1px 33px, transparent 33px); }
.act::after { left: 1px; width: 32px; }
.tray { margin-left: auto; display: flex; align-items: center; color: #fff; padding-right: 1px; }
.t2 { margin-left: 7px; } .t3 { margin-left: 8px; } .t4 { margin-left: 9px; } .t5 { margin-left: 9px; } .t6 { margin-left: 6px; }
.time { font: 12.500px/28px "Open Sans", "Noto Sans", sans-serif; margin-left: 12px; width: 43px; white-space: nowrap; letter-spacing: -.7px; }
.t7 { margin-left: 17px; margin-right: 1px; }
.desk { width: 1px; height: 28px; margin-left: 19px; background: #5c8a8f; }

.dialog { position: absolute; left: 172px; top: 241px; width: 439px; height: 143px; box-sizing: border-box; border: 1px solid #32466e; border-radius: 5px 5px 3px 3px; background: #e9f0f5; box-shadow: 2px 4px 7px rgba(30, 45, 60, .65); }
.dtitle { height: 24px; border-radius: 4px 4px 0 0; background: linear-gradient(#3c5fae, #3a5eb0 30%, #1b3779); color: #e4ebf6; display: flex; align-items: center; padding-left: 5px; white-space: nowrap; letter-spacing: -.3px; }
.ds { width: 14px; height: 12px; margin-right: 3px; }
.dx { margin: 0 5px 0 auto; width: 14px; height: 13px; border: 1px solid #1f3b80; display: flex; align-items: center; justify-content: center; }
.p1, .p2 { margin: 0; padding-left: 5px; line-height: 16px; white-space: nowrap; }
.p1 { margin-top: 10px; letter-spacing: -.25px; } .p2 { margin-top: 25px; }
.dbtns { display: flex; gap: 7.500px; margin: 22px 0 0 2px; }
.dbtns button { width: 137px; height: 22px; }
.dbtns .def { position: relative; background: linear-gradient(#fff0b0, #fadb66); }
.corners { position: absolute; left: -2px; top: -3px; }
.dbtns .cancel { display: flex; align-items: center; padding-left: 1px; }
.cancel span { margin-left: 48px; }
.caret { position: absolute; left: 340px; top: 323px; }
</style>
